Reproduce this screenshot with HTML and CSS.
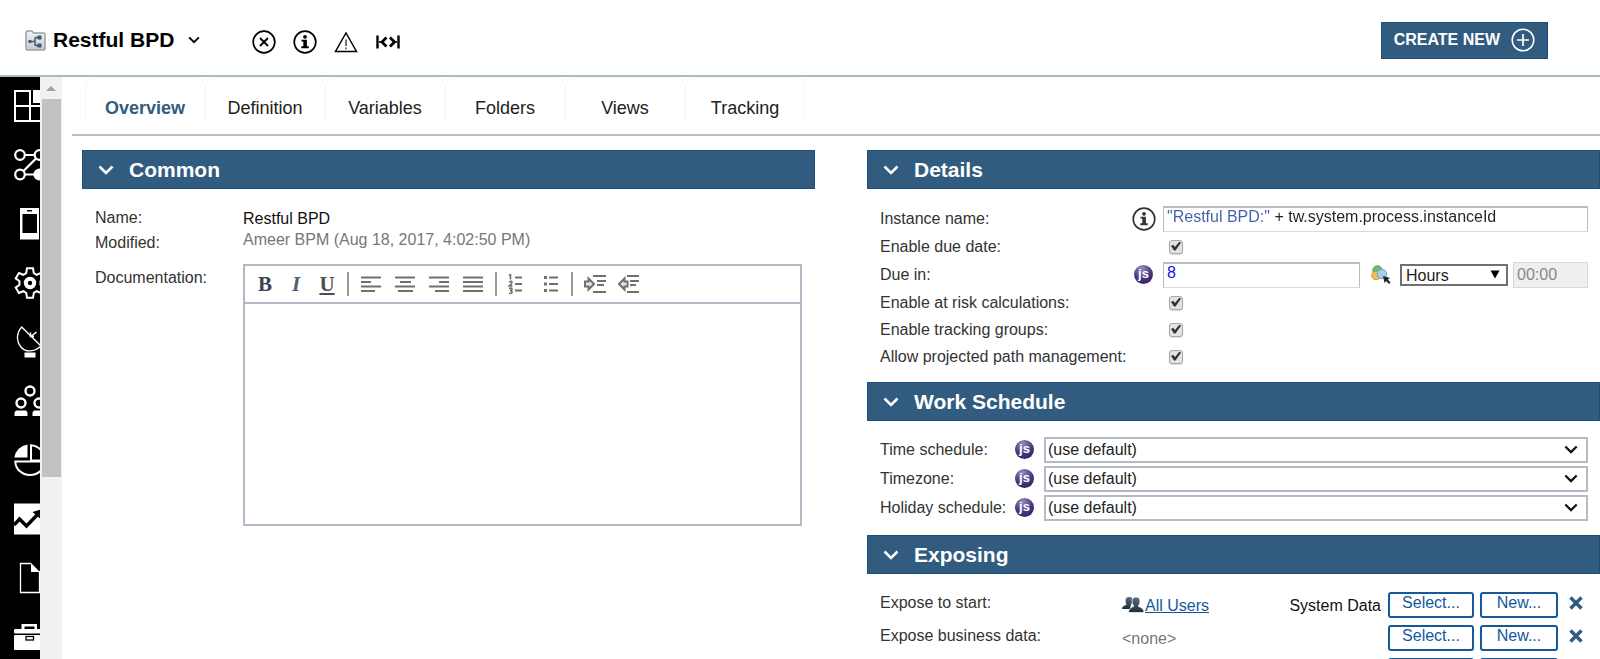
FILE: index.html
```html
<!DOCTYPE html>
<html lang="en">

<head>
    <meta charset="UTF-8">
    <meta name="viewport" content="width=device-width, initial-scale=1.0">
    <title>Restful BPD</title>
    <link rel="stylesheet" href="styles.css">
</head>

<body>
    <!-- shared icons -->
    <svg class="defs" width="0" height="0" aria-hidden="true">
        <defs>
            <linearGradient id="folderFill" x1="0" y1="0" x2="0" y2="1">
                <stop offset="0" stop-color="#f4f4f4"/>
                <stop offset="1" stop-color="#c6c9cc"/>
            </linearGradient>
            <linearGradient id="usersFill" x1="0" y1="0" x2="0" y2="1">
                <stop offset="0" stop-color="#5b7186"/>
                <stop offset="1" stop-color="#1d2b36"/>
            </linearGradient>
        </defs>
        <symbol id="chevron" viewBox="0 0 16 10">
            <path d="M1.5 1.500L8 8L14.500 1.500" fill="none" stroke="currentColor" stroke-width="2.500"/>
        </symbol>
        <symbol id="info" viewBox="0 0 24 24">
            <circle cx="12" cy="12" r="10.800" fill="none" stroke="currentColor" stroke-width="1.700"/>
            <circle cx="12" cy="6.800" r="1.900" fill="currentColor"/>
            <path d="M8.500 9.800H13.900V16.300H15.700V18.200H8.300V16.300H10.300V11.600H8.500z" fill="currentColor"/>
        </symbol>
        <symbol id="cross" viewBox="0 0 14 14">
            <path d="M1.500 1.500L12.500 12.500M12.500 1.500L1.500 12.500" stroke="#315c7f" stroke-width="3.400"/>
        </symbol>
    </svg>

    <header class="header">
        <svg class="folder" width="21" height="21" viewBox="0 0 21 21" aria-hidden="true">
            <path d="M1 2.500Q1 1 2.500 1H7L8.500 3H18.500Q20 3 20 4.500V18.500Q20 20 18.500 20H2.500Q1 20 1 18.500z" fill="url(#folderFill)" stroke="#9da1a5" stroke-width="1.500"/>
            <path d="M5 11.500H10M10 7.500V15.500M10 7.500H15M10 15.500H15" stroke="#3c5878" stroke-width="1.500" fill="none"/>
            <circle cx="5" cy="11.500" r="1.800" fill="#3c5878"/>
            <rect x="12.500" y="5.500" width="4" height="4" fill="#3c5878"/>
            <rect x="12.500" y="13.500" width="4" height="4" fill="#3c5878"/>
        </svg>
        <h1 class="title">Restful BPD</h1>
        <button class="icon-btn" aria-label="Open menu"><svg width="12" height="8"><use href="#chevron"/></svg></button>
        <nav class="header-icons" aria-label="Validation">
            <button class="icon-btn" aria-label="Errors">
                <svg width="24" height="24" viewBox="0 0 24 24" fill="none" stroke="#000">
                    <circle cx="12" cy="12" r="10.800" stroke-width="1.700"/>
                    <path d="M8 8L16 16M16 8L8 16" stroke-width="1.900"/>
                </svg>
            </button>
            <button class="icon-btn" aria-label="Information"><svg width="24" height="24"><use href="#info"/></svg></button>
            <button class="icon-btn" aria-label="Warnings">
                <svg width="24" height="24" viewBox="0 0 24 24" fill="none" stroke="#000">
                    <path d="M12 3L22.500 21.500H1.500z" stroke-width="1.500"/>
                    <path d="M12 9.500V16M12 17.500V19.300" stroke-width="1.500" stroke="#444"/>
                </svg>
            </button>
            <button class="icon-btn" aria-label="Toggle source">
                <svg width="26" height="24" viewBox="0 0 26 24" fill="none" stroke="#000" stroke-width="2.400">
                    <path d="M2.500 5.500V18.500M23.500 5.500V18.500"/>
                    <path d="M11.500 7.500L7 12L11.500 16.500M15 7.500L19.500 12L15 16.500" stroke-width="2.800"/>
                    <path d="M4 12H8M18 12H22" stroke-width="1.500"/>
                </svg>
            </button>
        </nav>
        <button class="create">
            CREATE NEW
            <svg width="24" height="24" viewBox="0 0 24 24" fill="none" stroke="#fff">
                <circle cx="12" cy="12" r="10.800" stroke-width="1.500"/>
                <path d="M12 6V18M6 12H18" stroke-width="1.700"/>
            </svg>
        </button>
    </header>

    <div class="workspace">
        <nav class="sidebar" aria-label="Library">
            <a href="#" aria-label="All">
                <svg width="32" height="32" viewBox="0 0 32 32" fill="none" stroke="#fff" stroke-width="2">
                    <path d="M17 1H1V31H31V16M1 16H31M16 1V31"/>
                    <rect x="19" y="0" width="13" height="13" fill="#fff" stroke="none"/>
                </svg>
            </a>
            <a href="#" aria-label="Processes">
                <svg width="32" height="32" viewBox="0 0 32 32" fill="none" stroke="#fff" stroke-width="2.200">
                    <path d="M11 6H20M22 9.500L9.500 22M11 25.500H20"/>
                    <circle cx="6" cy="6" r="4.800"/>
                    <circle cx="25.500" cy="6" r="4.800"/>
                    <circle cx="6" cy="25.500" r="4.800"/>
                    <circle cx="25.500" cy="25.500" r="5" fill="#fff"/>
                </svg>
            </a>
            <a href="#" aria-label="User interface">
                <svg width="32" height="32" viewBox="0 0 32 32">
                    <rect x="6" y="0" width="19" height="31.500" fill="#fff"/>
                    <rect x="8.500" y="6" width="14.500" height="19" fill="#000"/>
                    <rect x="13" y="2" width="5" height="1.500" fill="#000"/>
                </svg>
            </a>
            <a href="#" aria-label="Services">
                <svg width="32" height="32" viewBox="0 0 32 32" fill="none" stroke="#fff" stroke-width="2">
                    <path d="M12.200 6.100L13 1.300H19L19.800 6.100L22.700 7.800L27.100 6L30.300 11.400L26.500 14.300V17.700L30.300 20.600L27.100 26L22.700 24.200L19.800 25.900L19 30.700H13L12.200 25.900L9.300 24.200L4.900 26L1.700 20.600L5.500 17.700V14.300L1.700 11.400L4.900 6L9.300 7.800z"/>
                    <circle cx="16" cy="16" r="4.200" stroke-width="4"/>
                </svg>
            </a>
            <a href="#" aria-label="Events">
                <svg width="32" height="32" viewBox="0 0 32 32" fill="none" stroke="#fff" stroke-width="1.300">
                    <path d="M7.700 1L27 20C20 26.500 11 26.500 6.500 20.500C2 14.500 2.500 7 7.700 1z"/>
                    <path d="M17 10.500L22.500 6M16.500 6.500V10.500H20" stroke-width="1.600"/>
                    <rect x="10.500" y="26.500" width="11" height="5" fill="#fff" stroke="none"/>
                </svg>
            </a>
            <a href="#" aria-label="Teams">
                <svg width="32" height="32" viewBox="0 0 32 32" fill="none" stroke="#fff" stroke-width="2.400">
                    <circle cx="16" cy="6" r="4.500"/>
                    <circle cx="7" cy="18" r="4.500"/>
                    <circle cx="25" cy="18" r="4.500"/>
                    <path d="M2 25.500H12L13.500 27.500V31H.5V27.500zM20 25.500H30L31.500 27.500V31H18.500V27.500z" fill="#fff" stroke="none"/>
                </svg>
            </a>
            <a href="#" aria-label="Performance">
                <svg width="32" height="32" viewBox="0 0 32 32" fill="none" stroke="#fff" stroke-width="2">
                    <path d="M13.500 .5V13.500H.3A15.500 15.500 0 0 1 13.500 .5z" fill="#fff" stroke="none"/>
                    <path d="M17 1.300A14.500 14.500 0 0 1 30.700 16.500H17z"/>
                    <path d="M1.300 17.500H30.700A14.700 13.500 0 0 1 1.300 17.500z"/>
                </svg>
            </a>
            <a href="#" aria-label="Monitoring">
                <svg width="32" height="32" viewBox="0 0 32 32">
                    <rect x="0" y=".5" width="32" height="31" fill="#fff"/>
                    <path d="M0 22L5.500 16L12.500 23L25 10" fill="none" stroke="#000" stroke-width="3.500"/>
                    <path d="M18.500 9L28 6L26.500 16z" fill="#000"/>
                </svg>
            </a>
            <a href="#" aria-label="Files">
                <svg width="32" height="32" viewBox="0 0 32 32">
                    <path d="M17 1.500H6.500V30.500H25.500V9" fill="none" stroke="#fff" stroke-width="1.300"/>
                    <path d="M17 1L26 10H17z" fill="#fff"/>
                </svg>
            </a>
            <a href="#" aria-label="Toolkits">
                <svg width="32" height="32" viewBox="0 0 32 32" fill="#fff">
                    <path d="M7.500 8V3H23V8H20.500V5.500H10.500V8z"/>
                    <rect x="0" y="8" width="32" height="4.500" rx="1"/>
                    <rect x="0" y="14" width="32" height="15" rx="1"/>
                    <rect x="12" y="15.500" width="7.500" height="3.500" fill="#fff" stroke="#000" stroke-width="1.300"/>
                </svg>
            </a>
        </nav>
        <div class="scrollbar" aria-hidden="true">
            <div class="scroll-arrow"></div>
            <div class="scroll-thumb"></div>
        </div>

        <main class="content">
            <nav class="tabs" aria-label="Sections">
                <a class="tab active" href="#">Overview</a>
                <a class="tab" href="#">Definition</a>
                <a class="tab" href="#">Variables</a>
                <a class="tab" href="#">Folders</a>
                <a class="tab" href="#">Views</a>
                <a class="tab" href="#">Tracking</a>
            </nav>

            <div class="columns">
                <section class="section">
                    <h2 class="section-title"><svg width="16" height="10"><use href="#chevron"/></svg>Common</h2>
                    <div class="common">
                        <div class="common-labels">
                            <span>Name:</span>
                            <span>Modified:</span>
                            <label for="documentation">Documentation:</label>
                        </div>
                        <div class="common-values">
                            <span class="strong">Restful BPD</span>
                            <span class="muted">Ameer BPM (Aug 18, 2017, 4:02:50 PM)</span>
                            <div class="editor">
                                <div class="toolbar">
                                    <div class="group letters">
                                        <button class="tool bold">B</button>
                                        <button class="tool italic">I</button>
                                        <button class="tool underline">U</button>
                                    </div>
                                    <div class="group">
                                        <button class="tool" aria-label="Align left"><svg width="20" height="16" viewBox="0 0 20 16"><path d="M0 1.500H20M0 6H10M0 10.500H20M0 15H14"/></svg></button>
                                        <button class="tool" aria-label="Align center"><svg width="20" height="16" viewBox="0 0 20 16"><path d="M0 1.500H20M5 6H16M0 10.500H20M3 15H18"/></svg></button>
                                        <button class="tool" aria-label="Align right"><svg width="20" height="16" viewBox="0 0 20 16"><path d="M0 1.500H20M10 6H20M0 10.500H20M6 15H20"/></svg></button>
                                        <button class="tool" aria-label="Justify"><svg width="20" height="16" viewBox="0 0 20 16"><path d="M0 1.500H20M0 6H20M0 10.500H20M0 15H20"/></svg></button>
                                    </div>
                                    <div class="group lists">
                                        <button class="tool" aria-label="Numbered list">
                                            <svg width="16" height="20" viewBox="0 0 16 20">
                                                <path d="M7 3.500H14M7 10H14M7 16.500H14"/>
                                                <path d="M1 1.500L2.500 .5V5.500M1 8Q4 6.500 4 8.500Q4 10 1 12H4.500M1 14.500Q4 13.500 4 15Q4 16.500 2 16.500Q4.500 17 4 18.500Q3.500 20 1 19.200" stroke-width="1.600"/>
                                            </svg>
                                        </button>
                                        <button class="tool" aria-label="Bulleted list"><svg width="16" height="20" viewBox="0 0 16 20"><path d="M6 3.500H15M6 10H15M6 16.500H15"/><path d="M1 3.500H4M1 10H4M1 16.500H4" stroke-width="3"/></svg></button>
                                    </div>
                                    <div class="group">
                                        <button class="tool" aria-label="Indent"><svg width="22" height="20" viewBox="0 0 22 20"><path d="M9 2H22M13 7H22M13 11H20M9 18H22"/><path d="M1 7.500H4.500V4.500L10 10L4.500 15.500V12.500H1z" fill="#dfe6e3"/></svg></button>
                                        <button class="tool" aria-label="Outdent"><svg width="22" height="20" viewBox="0 0 22 20"><path d="M9 2H21M12 7H21M12 11H18M9 18H21"/><path d="M9.500 7.500H6.500V4.500L1 10L6.500 15.500V12.500H9.500z" fill="#dfe6e3"/></svg></button>
                                    </div>
                                </div>
                                <textarea id="documentation"></textarea>
                            </div>
                        </div>
                    </div>
                </section>

                <div class="side">
                    <section class="section">
                        <h2 class="section-title"><svg width="16" height="10"><use href="#chevron"/></svg>Details</h2>
                        <div class="details">
                            <div class="row tall">
                                <label for="instance">Instance name:</label>
                                <svg width="24" height="24"><use href="#info"/></svg>
                                <div class="field"><input id="instance" class="expression" type="text" value='"Restful BPD:" + tw.system.process.instanceId'></div>
                            </div>
                            <div class="row">
                                <label for="due">Enable due date:</label>
                                <input id="due" class="check" type="checkbox" checked>
                            </div>
                            <div class="row tall">
                                <label for="dueIn">Due in:</label>
                                <span class="js">js</span>
                                <div class="due">
                                    <div class="field"><input id="dueIn" class="number" type="text" value="8"></div>
                                    <button class="icon-btn" aria-label="Pick variable">
                                        <svg width="20" height="20" viewBox="0 0 20 20">
                                            <circle cx="6.500" cy="5.500" r="4.700" fill="#6bbd7c" stroke="#4d9961"/>
                                            <circle cx="5" cy="10.500" r="4.300" fill="#f3bd5b" stroke="#cf9738"/>
                                            <circle cx="11" cy="9" r="4.700" fill="#a5cfec" stroke="#6ba2cc"/>
                                            <path d="M12 11L19 13L16.800 14.500L19.500 17.500L18 19L15.200 16L13.500 18z" fill="#222"/>
                                        </svg>
                                    </button>
                                    <div class="select units">
                                        <select aria-label="Units"><option>Hours</option></select>
                                        <svg width="10" height="9" viewBox="0 0 10 9"><path d="M.5 .5H9.500L5 8.500z" fill="#000"/></svg>
                                    </div>
                                    <input class="time" type="text" value="00:00" disabled aria-label="Time">
                                </div>
                            </div>
                            <div class="row">
                                <label for="risk">Enable at risk calculations:</label>
                                <input id="risk" class="check" type="checkbox" checked>
                            </div>
                            <div class="row">
                                <label for="groups">Enable tracking groups:</label>
                                <input id="groups" class="check" type="checkbox" checked>
                            </div>
                            <div class="row">
                                <label for="path">Allow projected path management:</label>
                                <input id="path" class="check" type="checkbox" checked>
                            </div>
                        </div>
                    </section>

                    <section class="section">
                        <h2 class="section-title"><svg width="16" height="10"><use href="#chevron"/></svg>Work Schedule</h2>
                        <div class="schedule">
                            <div class="row">
                                <label for="timeSchedule">Time schedule:</label>
                                <span class="js">js</span>
                                <div class="select">
                                    <select id="timeSchedule"><option>(use default)</option></select>
                                    <svg width="14" height="9"><use href="#chevron"/></svg>
                                </div>
                            </div>
                            <div class="row">
                                <label for="timezone">Timezone:</label>
                                <span class="js">js</span>
                                <div class="select">
                                    <select id="timezone"><option>(use default)</option></select>
                                    <svg width="14" height="9"><use href="#chevron"/></svg>
                                </div>
                            </div>
                            <div class="row">
                                <label for="holiday">Holiday schedule:</label>
                                <span class="js">js</span>
                                <div class="select">
                                    <select id="holiday"><option>(use default)</option></select>
                                    <svg width="14" height="9"><use href="#chevron"/></svg>
                                </div>
                            </div>
                        </div>
                    </section>

                    <section class="section">
                        <h2 class="section-title"><svg width="16" height="10"><use href="#chevron"/></svg>Exposing</h2>
                        <div class="exposing">
                            <div class="row">
                                <span>Expose to start:</span>
                                <span class="value">
                                    <svg width="22" height="17" viewBox="0 0 22 17" fill="url(#usersFill)">
                                        <path d="M7 1Q10.500 .5 10.500 4.500Q10.500 7 9 8.500L8 13H0Q0 10 4.500 8.800Q3.500 7 3.500 4.500Q3.500 1 7 1z"/>
                                        <path d="M14 1Q18 1 18 5.500Q18 8 16.500 9.500V10.500Q22 12 22 16.500H6.500Q6.500 12 11.500 10.500V9.500Q10 8 10 5.500Q10 1 14 1z" stroke="#fff" stroke-width=".7"/>
                                    </svg>
                                    <a href="#">All Users</a>
                                </span>
                                <span class="strong value system">System Data</span>
                                <button class="btn">Select...</button>
                                <button class="btn">New...</button>
                                <button class="icon-btn" aria-label="Clear"><svg width="14" height="14"><use href="#cross"/></svg></button>
                            </div>
                            <div class="row">
                                <span>Expose business data:</span>
                                <span class="value muted">&lt;none&gt;</span>
                                <span></span>
                                <button class="btn">Select...</button>
                                <button class="btn">New...</button>
                                <button class="icon-btn" aria-label="Clear"><svg width="14" height="14"><use href="#cross"/></svg></button>
                            </div>
                            <div class="row">
                                <span></span>
                                <span></span>
                                <span></span>
                                <button class="btn" aria-label="Select"></button>
                                <button class="btn" aria-label="New"></button>
                            </div>
                        </div>
                    </section>
                </div>
            </div>
        </main>
    </div>
</body>

</html>
```
FILE: styles.css
```css
* {
    box-sizing: border-box;
}

body {
    margin: 0;
    height: 100vh;
    display: flex;
    flex-direction: column;
    overflow: hidden;
    background-color: #fff;
    color: #333;
    font-family: "Liberation Sans", Arial, sans-serif;
    font-size: 16px;
    line-height: 20px;
}

h1, h2 {
    margin: 0;
}

svg {
    display: block;
    flex-shrink: 0;
}

button, input, select, textarea {
    font: inherit;
    margin: 0;
}

button {
    cursor: pointer;
}

.defs {
    position: absolute;
}

.js {
    justify-self: center;
    width: 19px;
    height: 19px;
    border-radius: 50%;
    background: radial-gradient(circle at 40% 20%, #958cc0, #4b3a80 50%, #23124f);
    color: #fff;
    font-size: 13px;
    font-weight: bold;
    line-height: 17px;
    text-align: center;
}

/* header */

.header {
    display: flex;
    align-items: center;
    flex-shrink: 0;
    height: 77px;
    padding: 5px 52px 0 25px;
    border-bottom: 2px solid #abbdb8;
    color: #000;
}

.title {
    margin: 0 14px 0 7px;
    font-size: 21px;
    line-height: 24px;
}

.icon-btn {
    padding: 0;
    border: none;
    background: none;
    color: #000;
}

.header-icons {
    display: flex;
    gap: 17px;
    margin-left: 52px;
    padding-top: 3px;
}

.create {
    display: flex;
    align-items: center;
    gap: 11px;
    height: 37px;
    margin-left: auto;
    padding: 0 12px;
    border: 1px solid #1c4f79;
    background-color: #315c7f;
    color: #fff;
    font-weight: bold;
}

/* left bar */

.workspace {
    display: flex;
    flex: 1;
    min-height: 0;
}

.sidebar {
    display: flex;
    flex-direction: column;
    gap: 27px;
    width: 40px;
    flex-shrink: 0;
    padding: 13px 0 0 14px;
    overflow: hidden;
    background-color: #000;
}

.scrollbar {
    width: 22px;
    flex-shrink: 0;
    padding: 9px 1px 0 2px;
    background-color: #f1f1f1;
}

.scroll-arrow {
    height: 5px;
    margin: 0 5px 8px 4px;
    background-color: #a3a3a3;
    clip-path: polygon(50% 0, 100% 100%, 0 100%);
}

.scroll-thumb {
    height: 66%;
    background-color: #c1c1c1;
}

/* tabs */

.content {
    flex: 1;
    min-width: 0;
    padding-left: 10px;
}

.tabs {
    display: flex;
    height: 59px;
    padding-left: 13px;
    border-bottom: 2px solid #b9bfcc;
}

.tab {
    width: 120px;
    height: 42px;
    padding-top: 20px;
    border: 1px solid #f8f8f8;
    border-bottom: none;
    border-radius: 10px 10px 0 0;
    color: #222;
    font-size: 18px;
    text-align: center;
    text-decoration: none;
}

.tab.active {
    color: #315c7f;
    font-weight: bold;
}

/* sections */

.columns {
    display: grid;
    grid-template-columns: 1fr 1fr;
    gap: 52px;
    align-items: start;
    padding: 14px 0 0 10px;
}

.section-title {
    display: flex;
    align-items: center;
    gap: 15px;
    height: 39px;
    padding-left: 15px;
    border: 1px solid #1c4f79;
    background-color: #315c7f;
    color: #fff;
    font-size: 21px;
    line-height: 24px;
}

.strong {
    color: #111;
}

.muted {
    color: #777;
}

.common {
    display: flex;
    padding: 19px 13px 0 13px;
}

.common-labels {
    display: flex;
    flex-direction: column;
    width: 148px;
}

.common-labels span {
    margin-bottom: 5px;
}

.common-labels label {
    margin-top: 10px;
}

.common-values {
    display: flex;
    flex: 1;
    flex-direction: column;
}

.common-values span {
    line-height: 21px;
}

.editor {
    margin-top: 14px;
    border: 2px solid #b4b9c6;
}

.toolbar {
    display: flex;
    align-items: center;
    height: 38px;
    padding-left: 6px;
    border-bottom: 2px solid #b4b9c6;
}

.group {
    display: flex;
    align-items: center;
    height: 24px;
    gap: 12px;
    padding: 0 11px;
    border-left: 2px solid #999;
}

.letters {
    gap: 11px;
    padding: 0 10px 0 4px;
    border-left: none;
}

.lists {
    gap: 19px;
    padding: 0 12px 0 11px;
}

.tool {
    display: flex;
    justify-content: center;
    min-width: 20px;
    padding: 0 1px;
    border: none;
    background: none;
    color: #4a4f55;
}

.lists .tool {
    min-width: 16px;
    padding: 0;
}

.group:last-child .tool {
    padding: 0;
}

.tool svg {
    fill: none;
    stroke: #70706c;
    stroke-width: 2px;
}

.bold, .italic, .underline {
    font-family: "Liberation Serif", serif;
    font-size: 21px;
    font-weight: bold;
}

.bold {
    color: #39434f;
}

.italic {
    font-style: italic;
    color: #4f6071;
}

.underline {
    text-decoration: underline;
}

textarea {
    display: block;
    width: 100%;
    height: 220px;
    padding: 4px;
    border: none;
    outline: none;
    resize: none;
}

/* form rows */

.row {
    display: grid;
    align-items: center;
}

.details {
    padding: 15px 12px 12px 13px;
}

.details .row {
    grid-template-columns: 251px 24px 1fr;
    height: 27px;
}

.details .row > svg {
    justify-self: center;
}

.details label {
    grid-column: 1 / 2;
    white-space: nowrap;
}

.details .tall {
    height: 29px;
}

.details .field,
.details .check {
    margin-left: 7px;
}

.field {
    height: 26px;
    border: 1px solid #d3dae0;
    border-top: 2px solid #b4bcc6;
    border-left-color: #b4bcc6;
    border-right-color: #b4bcc6;
}

.field input {
    display: block;
    width: 100%;
    height: 18px;
    padding: 0 3px;
    border: none;
    outline: none;
    background: none;
}

/* string part of the expression is blue, the rest is dark */
.field .expression {
    background: linear-gradient(to right, #3f5fae 106px, #222 106px);
    -webkit-background-clip: text;
    background-clip: text;
    color: transparent;
}

.field .number {
    color: #1414e6;
}

.details .check {
    appearance: none;
    grid-column: 3;
    width: 14px;
    height: 14px;
    margin-left: 13px;
    border: 1px solid #a6a6a6;
    border-radius: 3px;
    background-color: #e3e3e3;
    box-shadow: 0 1px 1px #ddd;
}

.check:checked::before {
    content: "";
    display: block;
    width: 10px;
    height: 9px;
    margin: 1px;
    background-color: #333;
    clip-path: polygon(0 50%, 22% 35%, 40% 60%, 85% 0, 100% 15%, 45% 100%, 30% 100%);
}

.details .row {
    grid-template-columns: 251px 25px 1fr;
}

.details label {
    margin-right: -7px;
}

.due {
    display: flex;
    align-items: center;
}

.due .field {
    flex: 1;
}

.due .icon-btn {
    margin: 0 9px 0 11px;
}

.time {
    width: 75px;
    height: 26px;
    margin-left: 5px;
    padding: 0 3px;
    border: 1px solid #d8d8d8;
    background-color: #efefef;
    color: #888;
}

.select {
    display: grid;
    align-items: center;
    color: #111;
}

.select select,
.select svg {
    grid-area: 1 / 1;
}

.select svg {
    justify-self: end;
    margin-right: 10px;
    pointer-events: none;
}

.select select {
    appearance: none;
    width: 100%;
    height: 26px;
    padding: 0 2px;
    border: 2px solid #b4b9c6;
    border-radius: 0;
    background-color: #fff;
    color: #222;
}

.units {
    width: 108px;
}

.select.units select {
    height: 22px;
    padding: 0 4px;
    border-color: #707070;
}

.select.units svg {
    margin-right: 8px;
}

.schedule {
    padding: 14px 12px 13px 13px;
}

.schedule .row {
    grid-template-columns: 135px 19px 1fr;
    height: 29px;
}

.schedule .select {
    margin-left: 10px;
}

.exposing {
    padding: 14px 17px 0 13px;
}

.exposing .row {
    grid-template-columns: 242px 1fr 97px 86px 78px 11px 14px;
    height: 33px;
}

.exposing .row > span:first-child {
    padding-bottom: 3px;
}

.exposing .btn + .btn {
    margin-left: 6px;
}

.exposing .row {
    grid-template-columns: 242px 1fr auto 86px 84px 25px;
}

.exposing .icon-btn {
    justify-self: end;
    padding-bottom: 4px;
}

.value {
    display: flex;
    gap: 1px;
    padding-top: 3px;
}

.value a {
    color: #12599c;
}

.system {
    padding-right: 7px;
}

.btn {
    height: 26px;
    padding: 0 0 4px;
    border: 2px solid #15599a;
    border-radius: 3px;
    background-color: #fff;
    color: #12599c;
    line-height: 18px;
}
```
